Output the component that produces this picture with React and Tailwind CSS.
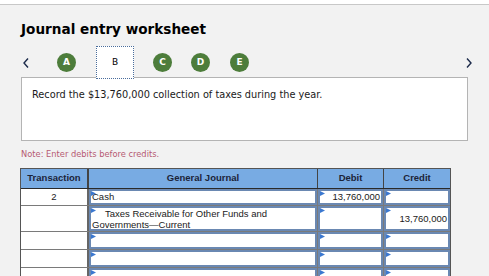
const rows = [
  { tx: "2", account: "Cash", indent: false, debit: "13,760,000", credit: "", h: "h-[17px]" },
  {
    tx: "",
    account: "Taxes Receivable for Other Funds and Governments\u2014Current",
    indent: true,
    debit: "",
    credit: "13,760,000",
    h: "h-[26px]",
  },
  { tx: "", account: "", debit: "", credit: "", h: "h-[18px]" },
  { tx: "", account: "", debit: "", credit: "", h: "h-[18px]" },
  { tx: "", account: "", debit: "", credit: "", h: "h-[18px]" },
];

function Flag() {
  return (
    <svg className="absolute left-0 top-0" width="5" height="5" viewBox="0 0 5 5">
      <path d="M0 0 L5 2.5 L0 5 Z" fill="#3b78d0" />
    </svg>
  );
}

function Entry({ children, align = "left", center = false }) {
  return (
    <div
      className={`relative h-full border-2 border-[#6a88b2] bg-white flex ${
        center ? "items-center" : "items-start"
      } ${align === "right" ? "justify-end pr-[1px]" : "justify-start pl-[1px]"}`}
    >
      <Flag />
      {children}
    </div>
  );
}

function Step({ letter }) {
  return (
    <div className="w-[19px] h-[19px] rounded-full bg-[#4d7d3b] text-white text-[9px] font-bold flex items-center justify-center">
      {letter}
    </div>
  );
}

export default function App() {
  return (
    <div className="w-[489px] h-[276px] overflow-hidden bg-[#f2f2f2] font-['DejaVu_Sans',sans-serif]">
      <div className="h-[5px] bg-white border-b border-[#c8c8c8]" />

      <div className="pl-[20px] pr-[21px]">
        <h1 className="mt-[16px] pl-[1px] text-[13.6px] leading-[17px] font-bold text-black">
          Journal entry worksheet
        </h1>

        {/* step navigation */}
        <div className="mt-[8px] h-[33px] flex items-center relative z-10">
          <svg className="ml-[3px]" width="6" height="10" viewBox="0 0 6 10">
            <path d="M5 0.5 L1 5 L5 9.5" fill="none" stroke="#1b2a4a" strokeWidth="1.4" />
          </svg>
          <div className="ml-[28px]">
            <Step letter="A" />
          </div>
          <div className="ml-[20px] self-stretch w-[38px] bg-white border border-dotted border-[#4a6d9c] flex items-center justify-center text-[9px] text-black">
            B
          </div>
          <div className="ml-[19px]">
            <Step letter="C" />
          </div>
          <div className="ml-[19px]">
            <Step letter="D" />
          </div>
          <div className="ml-[20px]">
            <Step letter="E" />
          </div>
          <svg className="ml-auto mr-[-4px]" width="6" height="10" viewBox="0 0 6 10">
            <path d="M1 0.5 L5 5 L1 9.5" fill="none" stroke="#1b2a4a" strokeWidth="1.4" />
          </svg>
        </div>

        <div className="ml-[1px] mt-[-2px] h-[64px] bg-white border border-[#b4b4b4] px-[10px] pt-[11px] text-[9.75px] leading-[12px] text-[#1a1a1a]">
          Record the $13,760,000 collection of taxes during the year.
        </div>

        <p className="mt-[8px] pl-[1px] text-[8.3px] leading-[10px] text-[#b65a72]">
          Note: Enter debits before credits.
        </p>

        <div className="mt-[9px] w-[431px] border border-[#555] font-['Liberation_Sans',Arial,sans-serif] text-[9.5px] text-[#1a1a1a]">
          <div className="flex h-[20px] bg-[#78abe3] text-[#1c2438] font-bold border-b border-[#2a2a2a]">
            <div className="w-[68px] border-r-2 border-[#444] flex items-center justify-center">Transaction</div>
            <div className="w-[229px] border-r border-[#444] flex items-center justify-center">General Journal</div>
            <div className="w-[66px] border-r border-[#444] flex items-center justify-center">Debit</div>
            <div className="flex-1 flex items-center justify-center">Credit</div>
          </div>
          {rows.map((r, i) => (
            <div key={i} className={`flex ${r.h} bg-white border-b border-[#7a7a7a]`}>
              <div className="w-[68px] border-r-2 border-[#666] flex items-center justify-center">{r.tx}</div>
              <div className="w-[229px] border-r border-[#7a7a7a]">
                <Entry>
                  <span className={`leading-[11px] ${r.indent ? "indent-[13px]" : ""}`}>{r.account}</span>
                </Entry>
              </div>
              <div className="w-[66px] border-r border-[#7a7a7a]">
                <Entry align="right">
                  <span className="leading-[11px]">{r.debit}</span>
                </Entry>
              </div>
              <div className="flex-1">
                <Entry align="right" center>
                  <span className="leading-[11px]">{r.credit}</span>
                </Entry>
              </div>
            </div>
          ))}
        </div>
      </div>
    </div>
  );
}
